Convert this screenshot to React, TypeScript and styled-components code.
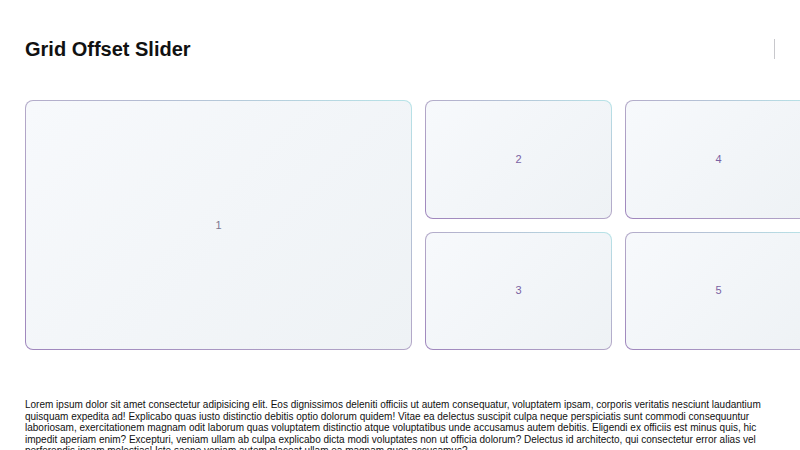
import React from "react";
import styled, { createGlobalStyle } from "styled-components";

const Global = createGlobalStyle`
  html, body { margin: 0; padding: 0; background: #ffffff; }
  body { font-family: "Liberation Sans", Arial, sans-serif; color: #111; overflow: hidden; }
`;

const Page = styled.div`
  width: 800px;
  height: 450px;
  overflow: hidden;
  padding: 0 25px;
  box-sizing: border-box;
`;

const Header = styled.header`
  display: flex;
  align-items: center;
  justify-content: space-between;
  height: 20px;
  padding-top: 39px;
  padding-bottom: 41px;
`;

const Title = styled.h1`
  margin: 0;
  font-size: 20px;
  font-weight: 700;
  line-height: 20px;
  color: #111;
`;

const Divider = styled.div`
  width: 1px;
  height: 20px;
  background: #c8c8cc;
`;

const Track = styled.div`
  display: grid;
  grid-auto-flow: column;
  grid-template-rows: 118.5px 118.5px;
  grid-auto-columns: 187px;
  gap: 13px;
  width: max-content;
`;

const Card = styled.div<{ $span?: boolean }>`
  grid-column: ${(p) => (p.$span ? "span 2" : "span 1")};
  grid-row: ${(p) => (p.$span ? "span 2" : "span 1")};
  border: 1px solid transparent;
  border-radius: 8px;
  background:
    linear-gradient(135deg, #f7f9fc 0%, #eef2f5 100%) padding-box,
    linear-gradient(30deg, #9f86bd 0%, #b3a8c8 50%, #b8e4e8 100%) border-box;
  display: flex;
  align-items: center;
  justify-content: center;
  padding-bottom: 1px;
  font-size: 11px;
  color: ${(p) => (p.$span ? "#7d7890" : "#7a62a3")};
`;

const Text = styled.p`
  margin: 49px 0 0;
  font-size: 10px;
  line-height: 11.5px;
  color: #111;
  width: 750px;
`;

const text =
  "Lorem ipsum dolor sit amet consectetur adipisicing elit. Eos dignissimos deleniti officiis ut autem consequatur, voluptatem ipsam, corporis veritatis nesciunt laudantium quisquam expedita ad! Explicabo quas iusto distinctio debitis optio dolorum quidem! Vitae ea delectus suscipit culpa neque perspiciatis sunt commodi consequuntur laboriosam, exercitationem magnam odit laborum quas voluptatem distinctio atque voluptatibus unde accusamus autem debitis. Eligendi ex officiis est minus quis, hic impedit aperiam enim? Excepturi, veniam ullam ab culpa explicabo dicta modi voluptates non ut officia dolorum? Delectus id architecto, qui consectetur error alias vel perferendis ipsam molestias! Iste saepe veniam autem placeat ullam ea magnam quos accusamus?";

export default function App() {
  return (
    <>
      <Global />
      <Page>
        <Header>
          <Title>Grid Offset Slider</Title>
          <Divider />
        </Header>
        <Track>
          <Card $span>1</Card>
          <Card>2</Card>
          <Card>3</Card>
          <Card>4</Card>
          <Card>5</Card>
          <Card>6</Card>
          <Card>7</Card>
        </Track>
        <Text>{text}</Text>
      </Page>
    </>
  );
}
